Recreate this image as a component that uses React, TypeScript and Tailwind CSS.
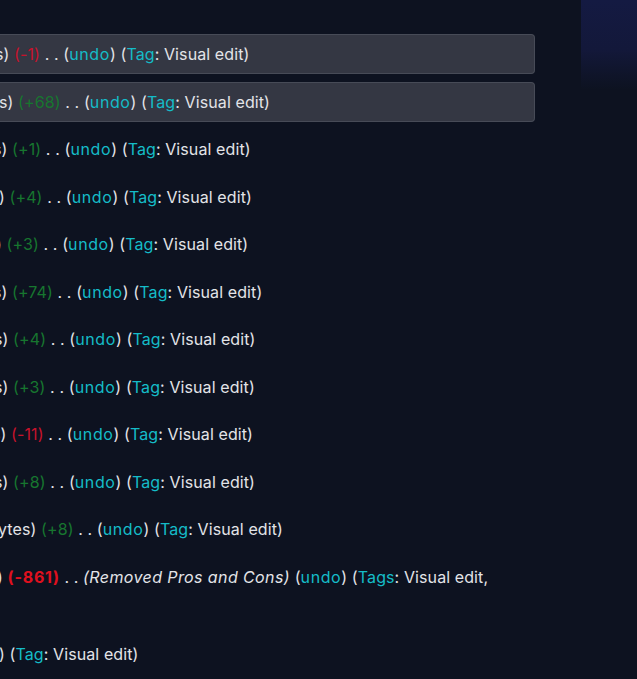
import React from "react";

const W = "text-[#e3e4e8]";
const C = "text-[#15bcc8]";
const G = "text-[#17762f]";
const R = "text-[#c8122c]";

function Tail({ tags = false, extra }: { tags?: boolean; extra?: React.ReactNode }) {
  return (
    <>
      <span className={W}> . . </span>
      {extra}
      <span className={W}>(</span>
      <span className={C + " tracking-[0.6px]"}>undo</span>
      <span className={W}>) (</span>
      <span className={C}>{tags ? "Tags" : "Tag"}</span>
      <span className={W}>{tags ? ": Visual edit," : ": Visual edit)"}</span>
    </>
  );
}

type Row = { pre: string; ml: string; diff: string; color: string; box?: boolean };

const rows: Row[] = [
  { pre: "s) ", ml: "ml-[-5px]", diff: "(-1)", color: R, box: true },
  { pre: "s) ", ml: "ml-[-1px]", diff: "(+68)", color: G, box: true },
  { pre: "s) ", ml: "ml-[-7px]", diff: "(+1)", color: G },
  { pre: ") ", ml: "ml-[-1px]", diff: "(+4)", color: G },
  { pre: ") ", ml: "ml-[-4px]", diff: "(+3)", color: G },
  { pre: "s) ", ml: "ml-[-7px]", diff: "(+74)", color: G },
  { pre: "s) ", ml: "ml-[-6px]", diff: "(+4)", color: G },
  { pre: "s) ", ml: "ml-[-6px]", diff: "(+3)", color: G },
  { pre: "s) ", ml: "ml-[-8px]", diff: "(-11)", color: R },
  { pre: "s) ", ml: "ml-[-6px]", diff: "(+8)", color: G },
  { pre: "ytes) ", ml: "ml-[-2px]", diff: "(+8)", color: G },
];

export default function App() {
  return (
    <div
      className="flex w-[637px] h-[679px] overflow-hidden bg-[#0d1220] text-[16px] leading-[24px] tracking-[0.1px]"
      style={{ fontFamily: "Inter, 'Noto Sans', sans-serif" }}
    >
      <div className="w-[581px] shrink-0 pr-[46px] pt-[34px] overflow-hidden">
        <div className="flex flex-col gap-[7.5px]">
          {rows.map((r, i) => (
            <div
              key={i}
              className={
                "h-10 flex items-center whitespace-nowrap overflow-hidden " +
                (r.box ? "bg-[#343743] border border-[#474b57] rounded-r-[4px] border-l-0" : "")
              }
            >
              <span className={r.ml}>
                <span className={W}>{r.pre}</span>
                <span className={r.color}>{r.diff}</span>
                <Tail />
              </span>
            </div>
          ))}
          <div className="h-[69.5px] pt-2 whitespace-nowrap overflow-hidden">
            <span className="ml-[-3px]">
              <span className={W}>) </span>
              <span className="text-[#e0101e] font-bold tracking-[0.8px]">(-861)</span>
              <Tail
                tags
                extra={
                  <>
                    <span className={"italic tracking-[0.4px] " + W}>(Removed Pros and Cons)</span>
                    <span className={W}> </span>
                  </>
                }
              />
            </span>
          </div>
          <div className="h-10 flex items-center whitespace-nowrap overflow-hidden">
            <span className="ml-[-1px]">
              <span className={W}>) (</span>
              <span className={C}>Tag</span>
              <span className={W}>: Visual edit)</span>
            </span>
          </div>
        </div>
      </div>
      <div className="flex-1 flex flex-col">
        <div className="h-[90px] bg-gradient-to-b from-[#141a42] via-[#13183a] via-55% to-[#0d1220]" />
      </div>
    </div>
  );
}
